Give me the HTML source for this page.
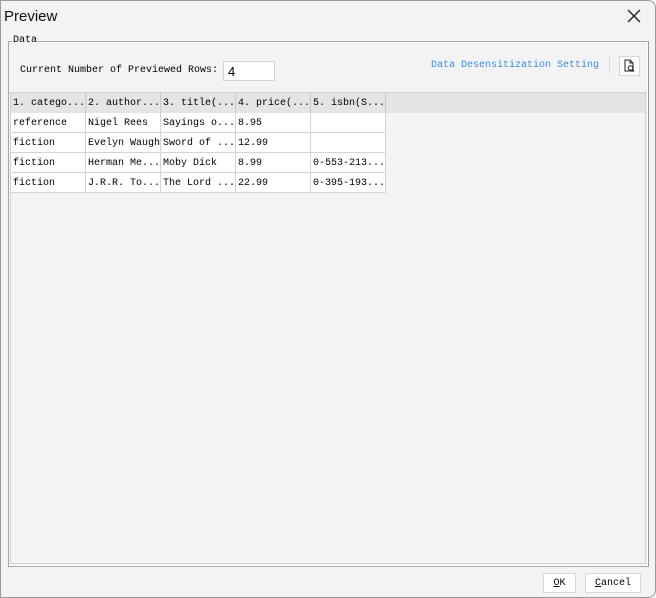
<!DOCTYPE html>
<html><head><style>
*{margin:0;padding:0;box-sizing:border-box}
body{width:656px;height:598px;background:#f3f3f6;position:relative;overflow:hidden;font-family:"Liberation Mono",monospace;font-size:10px;color:#000}
.win{position:absolute;left:0;top:0;width:656px;height:598px;border:1px solid #9a9a9a;border-radius:0 8px 8px 0;background:#f3f3f6}
.title{position:absolute;left:4px;top:8px;font-family:"Liberation Sans",sans-serif;font-size:15px;color:#111}
.close{position:absolute;left:626px;top:8px}
.grp{position:absolute;left:8px;top:41px;width:641px;height:526px;border:1px solid #a8a8a8;border-right-color:#999;box-shadow:inset -1px -1px 0 #fff}
.grp .lab{position:absolute;left:3px;top:-7px;background:#f3f3f6;padding:0 1px}
.a{position:absolute;white-space:nowrap}
.inp{position:absolute;left:223px;top:61px;width:52px;height:20px;background:#fff;border:1px solid #d0d0d0;padding:2px 4px;font-family:"Liberation Sans",sans-serif;font-size:13px}
.link{color:#3b8de0;left:431px;top:60px}
.sep{position:absolute;left:609px;top:57px;width:1px;height:16px;background:#dadada}
.ib{position:absolute;left:619px;top:56px;width:21px;height:20px;background:#fff;border:1px solid #d6d6d6}
.tbl{position:absolute;left:10px;top:92px;width:636px;height:472px;border:1px solid #d2d2d2;background:#f3f3f6}
.hdr{position:absolute;left:0;top:0;width:634px;height:20px;background:#e4e4e4}
.c{position:absolute;height:20px;line-height:21px;padding-left:2px;overflow:hidden;white-space:nowrap;border-right:1px solid #d4d4d4;border-bottom:1px solid #d4d4d4;background:#fff;width:75px}
.h{background:#e4e4e4;border-right:1px solid #c8c8c8;border-bottom:none}
.btn{position:absolute;top:573px;height:20px;background:#fff;border:1px solid #d8d8d8;text-align:center;line-height:19px}
</style></head><body>
<div class="win"></div>
<div class="title">Preview</div>
<svg class="close" width="16" height="16" viewBox="0 0 16 16"><path d="M2 2L14 14M14 2L2 14" stroke="#222" stroke-width="1.4"/></svg>
<div class="grp"><span class="lab">Data</span></div>
<div class="a" style="left:20px;top:65px">Current Number of Previewed Rows:</div>
<div class="inp">4</div>
<div class="a link">Data Desensitization Setting</div>
<div class="sep"></div>
<div class="ib"><svg width="19" height="18" viewBox="0 0 19 18"><path d="M5 3H10L13 6V14H5Z M10 3V6H13" fill="none" stroke="#222" stroke-width="1"/><circle cx="10.5" cy="11" r="2.3" fill="#fff" stroke="#222"/><path d="M12.2 12.7L14 14.5" stroke="#222" stroke-width="1.3"/></svg></div>
<div class="tbl">
<div class="hdr"></div>
<div class="c h" style="left:0;top:0">1. catego...</div>
<div class="c h" style="left:75px;top:0">2. author...</div>
<div class="c h" style="left:150px;top:0">3. title(...</div>
<div class="c h" style="left:225px;top:0">4. price(...</div>
<div class="c h" style="left:300px;top:0">5. isbn(S...</div>

<div class="c" style="left:0;top:20px">reference</div>
<div class="c" style="left:75px;top:20px">Nigel Rees</div>
<div class="c" style="left:150px;top:20px">Sayings o...</div>
<div class="c" style="left:225px;top:20px">8.95</div>
<div class="c" style="left:300px;top:20px"></div>

<div class="c" style="left:0;top:40px">fiction</div>
<div class="c" style="left:75px;top:40px">Evelyn Waugh</div>
<div class="c" style="left:150px;top:40px">Sword of ...</div>
<div class="c" style="left:225px;top:40px">12.99</div>
<div class="c" style="left:300px;top:40px"></div>

<div class="c" style="left:0;top:60px">fiction</div>
<div class="c" style="left:75px;top:60px">Herman Me...</div>
<div class="c" style="left:150px;top:60px">Moby Dick</div>
<div class="c" style="left:225px;top:60px">8.99</div>
<div class="c" style="left:300px;top:60px">0-553-213...</div>

<div class="c" style="left:0;top:80px">fiction</div>
<div class="c" style="left:75px;top:80px">J.R.R. To...</div>
<div class="c" style="left:150px;top:80px">The Lord ...</div>
<div class="c" style="left:225px;top:80px">22.99</div>
<div class="c" style="left:300px;top:80px">0-395-193...</div>
</div>
<div class="btn" style="left:543px;width:33px"><u>O</u>K</div>
<div class="btn" style="left:585px;width:56px"><u>C</u>ancel</div>
</body></html>
